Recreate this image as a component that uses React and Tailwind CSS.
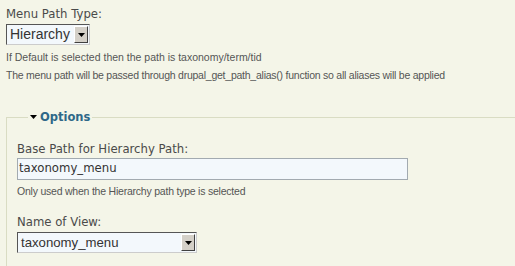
export default function App() {
  const label = "text-[11.7px] leading-[16px] text-[#4a4a4a] [font-family:'DejaVu_Sans',Verdana,sans-serif]";
  const help = "text-[10.5px] leading-[14px] text-[#555] [font-family:'Liberation_Sans',Tahoma,sans-serif]";
  return (
    <div className="w-[515px] h-[266px] overflow-hidden bg-[#f4f5e8] pl-[6px] pt-[6px]">
      <div className={label}>Menu Path Type:</div>
      <div className="mt-[2px] flex h-[21px] w-[84px] items-center border border-[#555] border-r-[#ccc] border-b-[#ccc] bg-[#f3f8fc]">
        <span className="flex-1 pl-[3px] text-[14px] leading-[19px] text-[#333] [font-family:'Liberation_Sans',Arial,sans-serif]">Hierarchy</span>
        <span className="mr-[1px] flex h-[17px] w-[14px] items-center justify-center border border-[#fff] border-r-[#404040] border-b-[#404040] bg-[#d4d0c8]">
          <svg width="7" height="4" viewBox="0 0 7 4"><path d="M0 0h7L3.5 4z" fill="#000" /></svg>
        </span>
      </div>
      <div className={`${help} mt-[5px]`}>If Default is selected then the path is taxonomy/term/tid</div>
      <div className={`${help} mt-[4px] tracking-[-0.24px]`}>The menu path will be passed through drupal_get_path_alias() function so all aliases will be applied</div>

      <fieldset className="mt-[27px] w-[560px] border border-[#d9dcc3] pl-[10px] pt-[16px]">
        <legend className="ml-[11px] flex items-center px-[2px] text-[11.5px] font-bold leading-[16px] text-[#2e6888] [font-family:'DejaVu_Sans',Verdana,sans-serif]">
          <svg width="7" height="4" viewBox="0 0 7 4" className="mr-[3px]"><path d="M0 0h7L3.5 4z" fill="#000" /></svg>
          Options
        </legend>
        <div className={label}>Base Path for Hierarchy Path:</div>
        <div className="mt-[1px] flex h-[22px] w-[391px] items-center border border-[#a2aab0] bg-[#f3f8fc] pl-[1px] text-[11.7px] text-[#333] [font-family:'DejaVu_Sans',Verdana,sans-serif]">taxonomy_menu</div>
        <div className={`${help} mt-[4px] tracking-[-0.22px]`}>Only used when the Hierarchy path type is selected</div>
        <div className={`${label} mt-[16px]`}>Name of View:</div>
        <div className="mt-[2px] flex h-[21px] w-[180px] items-center border border-[#555] border-r-[#ccc] border-b-[#ccc] bg-[#f3f8fc]">
          <span className="flex-1 pl-[3px] text-[13.2px] leading-[19px] text-[#333] [font-family:'Liberation_Sans',Arial,sans-serif]">taxonomy_menu</span>
          <span className="mr-[1px] flex h-[17px] w-[14px] items-center justify-center border border-[#fff] border-r-[#404040] border-b-[#404040] bg-[#d4d0c8]">
            <svg width="7" height="4" viewBox="0 0 7 4"><path d="M0 0h7L3.5 4z" fill="#000" /></svg>
          </span>
        </div>
        <div className="h-[20px]" />
      </fieldset>
    </div>
  );
}
